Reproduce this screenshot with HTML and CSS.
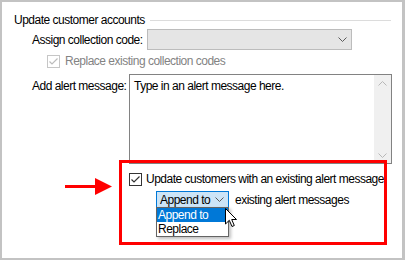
FILE: index.html
```html
<!DOCTYPE html>
<html>
<head>
<meta charset="utf-8">
<link rel="stylesheet" href="styles.css">
</head>
<body>
<div class="frame">
  <div class="group-head">
    <span class="group-title">Update customer accounts</span>
    <div class="rule"></div>
  </div>

  <div class="row assign">
    <span class="lbl">Assign collection code:</span>
    <div class="combo">
      <svg class="chev" width="9" height="5" viewBox="0 0 9 5"><path d="M0.5 0.5 L4.5 4.5 L8.5 0.5" fill="none" stroke="#5a5a5a" stroke-width="1"/></svg>
    </div>
  </div>

  <div class="row replace">
    <span class="cb cb-disabled">
      <svg width="11" height="11" viewBox="0 0 11 11"><path d="M1.5 5.5 L4 8 L9.5 2.5" fill="none" stroke="#bcbcbc" stroke-width="1.2"/></svg>
    </span>
    <span class="muted">Replace existing collection codes</span>
  </div>

  <div class="row alert">
    <span class="lbl lbl-alert">Add alert message:</span>
    <div class="textarea">
      <div class="ta-text">Type in an alert message here.</div>
      <div class="scroll">
        <svg width="9" height="5" viewBox="0 0 9 5"><path d="M0.5 4.5 L4.5 0.5 L8.5 4.5" fill="none" stroke="#b8b8b8" stroke-width="1"/></svg>
        <svg width="9" height="5" viewBox="0 0 9 5"><path d="M0.5 0.5 L4.5 4.5 L8.5 0.5" fill="none" stroke="#b8b8b8" stroke-width="1"/></svg>
      </div>
    </div>
  </div>

  <div class="row update">
    <span class="cb">
      <svg width="11" height="11" viewBox="0 0 11 11"><path d="M1.5 5.5 L4 8 L9.5 2.5" fill="none" stroke="#333" stroke-width="1.2"/></svg>
    </span>
    <span>Update customers with an existing alert message</span>
  </div>

  <div class="row mode">
    <div class="dd-wrap">
      <div class="dd">
        <span>Append to</span>
        <svg class="chev" width="9" height="5" viewBox="0 0 9 5"><path d="M0.5 0.5 L4.5 4.5 L8.5 0.5" fill="none" stroke="#5a5a5a" stroke-width="1"/></svg>
      </div>
      <ul class="dd-list">
        <li class="sel">Append to</li>
        <li>Replace</li>
      </ul>
      <svg class="cursor" width="14" height="20" viewBox="0 0 14 20"><path d="M0.5 0.5 L0.5 16 L4.3 12.3 L7 18.5 L9.3 17.5 L6.7 11.5 L11.5 11.5 Z" fill="#fff" stroke="#000" stroke-width="1" stroke-linejoin="miter"/></svg>
    </div>
    <span class="mode-text">existing alert messages</span>
  </div>

  <div class="callout"></div>
  <svg class="arrow" width="50" height="20" viewBox="0 0 50 20"><rect x="0" y="7" width="32" height="3" fill="#ff0000"/><polygon points="30,0 47,8.5 30,17" fill="#ff0000"/></svg>
</div>
</body>
</html>
```

FILE: styles.css
```css
* { box-sizing: border-box; }
html, body { margin: 0; padding: 0; background: #fff; }
body {
  font-family: "Liberation Sans", Arial, sans-serif;
  font-size: 12px;
  letter-spacing: -0.5px;
  color: #000;
}
.frame {
  position: relative;
  width: 405px;
  height: 260px;
  border: 2px solid #c3c3c3;
  border-right-width: 3px;
  background: #fff;
  overflow: hidden;
}
.group-head {
  display: flex;
  align-items: center;
  margin-top: 10px;
  padding-left: 12px;
  padding-right: 11px;
  height: 16px;
  line-height: 16px;
}
.rule {
  flex: 1;
  height: 1px;
  background: #dcdcdc;
  margin-left: 5px;
  margin-top: 1px;
}
.row { display: flex; align-items: center; line-height: 16px; }
.assign { margin-top: 1px; padding-left: 30px; height: 21px; }
.lbl { display: inline-block; width: 115px; }
.combo {
  width: 205px;
  height: 21px;
  background: #e5e5e5;
  border: 1px solid #bcbcbc;
  display: flex;
  align-items: center;
  justify-content: flex-end;
  padding-right: 4px;
}
.replace { margin-top: 3px; padding-left: 45px; height: 16px; }
.cb {
  width: 13px;
  height: 13px;
  border: 1px solid #333;
  display: inline-flex;
  align-items: center;
  justify-content: center;
  margin-right: 5px;
  background: #fff;
}
.cb-disabled { border-color: #c6c6c6; }
.muted { color: #838383; }
.alert { align-items: flex-start; margin-top: 5px; padding-left: 30px; }
.lbl-alert { width: 97px; margin-top: 4px; }
.textarea {
  width: 263px;
  height: 90px;
  border: 1px solid #828282;
  display: flex;
  background: #fff;
}
.ta-text { flex: 1; padding: 3px 0 0 4px; }
.scroll {
  width: 17px;
  background: #f0f0f0;
  display: flex;
  flex-direction: column;
  justify-content: space-between;
  align-items: center;
  padding: 6px 0 5px;
}
.update { margin-top: 7px; padding-left: 127px; height: 16px; }
.update .cb { margin-right: 4px; }
.mode { margin-top: 4px; padding-left: 154px; height: 17px; }
.dd-wrap { position: relative; }
.dd {
  width: 73px;
  height: 17px;
  background: #cce4f7;
  border: 1px solid #0078d7;
  display: flex;
  align-items: center;
  justify-content: space-between;
  padding: 0 4px 0 3px;
}
.dd-list {
  position: absolute;
  left: 0;
  top: 16px;
  width: 73px;
  margin: 0;
  padding: 0;
  list-style: none;
  background: #fff;
  border: 1px solid #646464;
  box-shadow: 2px 2px 3px rgba(0,0,0,0.25);
}
.dd-list li { height: 14px; line-height: 14px; padding-left: 1px; }
.dd-list li.sel { background: #0078d7; color: #fff; }
.cursor { position: absolute; left: 69px; top: 17px; }
.mode-text { margin-left: 6px; }
.callout {
  position: absolute;
  left: 117px;
  top: 158px;
  width: 268px;
  height: 85px;
  border: 3px solid #ff0000;
}
.arrow { position: absolute; left: 63px; top: 176px; }
```
